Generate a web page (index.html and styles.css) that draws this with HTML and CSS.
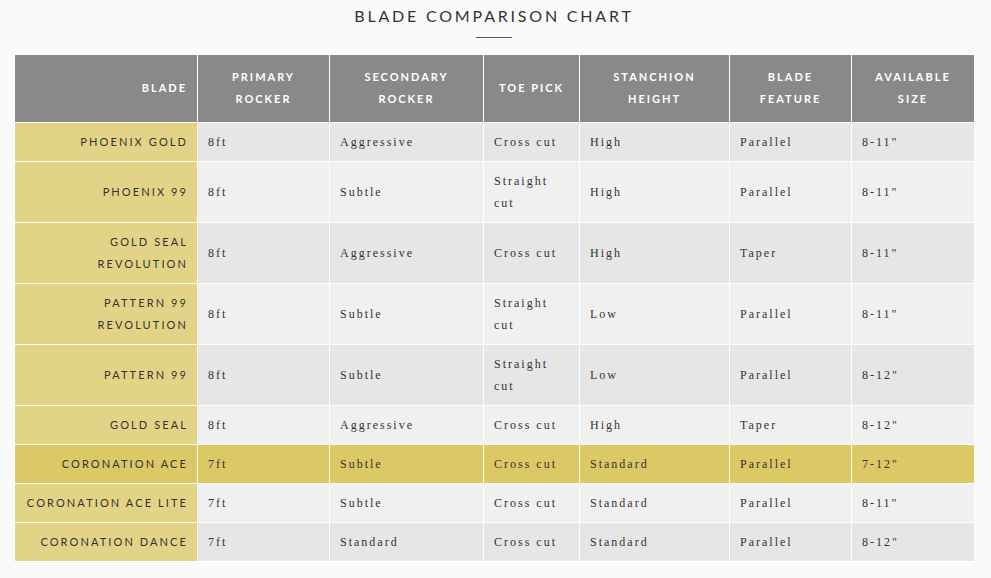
FILE: index.html
```html
<!DOCTYPE html>
<html lang="en">
<head>
<meta charset="utf-8">
<title>Blade Comparison Chart</title>
<link rel="stylesheet" href="styles.css">
</head>
<body>
<div class="page">
  <h1 class="title">BLADE COMPARISON CHART</h1>
  <div class="rule"></div>
  <table class="chart">
    <colgroup>
      <col class="c1"><col class="c2"><col class="c3"><col class="c4"><col class="c5"><col class="c6"><col class="c7">
    </colgroup>
    <thead>
      <tr>
        <th class="blade">BLADE</th>
        <th>PRIMARY ROCKER</th>
        <th>SECONDARY ROCKER</th>
        <th>TOE PICK</th>
        <th>STANCHION HEIGHT</th>
        <th>BLADE FEATURE</th>
        <th>AVAILABLE SIZE</th>
      </tr>
    </thead>
    <tbody>
      <tr class="odd"><td class="name">PHOENIX GOLD</td><td>8ft</td><td>Aggressive</td><td>Cross cut</td><td>High</td><td>Parallel</td><td>8-11"</td></tr>
      <tr class="even"><td class="name">PHOENIX 99</td><td>8ft</td><td>Subtle</td><td>Straight cut</td><td>High</td><td>Parallel</td><td>8-11"</td></tr>
      <tr class="odd"><td class="name">GOLD SEAL REVOLUTION</td><td>8ft</td><td>Aggressive</td><td>Cross cut</td><td>High</td><td>Taper</td><td>8-11"</td></tr>
      <tr class="even"><td class="name">PATTERN 99 REVOLUTION</td><td>8ft</td><td>Subtle</td><td>Straight cut</td><td>Low</td><td>Parallel</td><td>8-11"</td></tr>
      <tr class="odd"><td class="name">PATTERN 99</td><td>8ft</td><td>Subtle</td><td>Straight cut</td><td>Low</td><td>Parallel</td><td>8-12"</td></tr>
      <tr class="even"><td class="name">GOLD SEAL</td><td>8ft</td><td>Aggressive</td><td>Cross cut</td><td>High</td><td>Taper</td><td>8-12"</td></tr>
      <tr class="hl"><td class="name">CORONATION ACE</td><td>7ft</td><td>Subtle</td><td>Cross cut</td><td>Standard</td><td>Parallel</td><td>7-12"</td></tr>
      <tr class="even"><td class="name">CORONATION ACE LITE</td><td>7ft</td><td>Subtle</td><td>Cross cut</td><td>Standard</td><td>Parallel</td><td>8-11"</td></tr>
      <tr class="odd"><td class="name">CORONATION DANCE</td><td>7ft</td><td>Standard</td><td>Cross cut</td><td>Standard</td><td>Parallel</td><td>8-12"</td></tr>
    </tbody>
  </table>
</div>
</body>
</html>
```

FILE: styles.css
```css
html, body {
  margin: 0;
  padding: 0;
  background: #fafafa;
}
.page {
  padding: 0 17px 0 14px;
}
.title {
  margin: 0;
  padding-top: 6px;
  text-align: center;
  font-family: Lato, "Liberation Sans", sans-serif;
  font-weight: 400;
  font-size: 16px;
  line-height: 20px;
  letter-spacing: 2.8px;
  color: #333;
}
.rule {
  width: 36px;
  height: 1px;
  background: #555;
  margin: 11px auto 16px;
}
.chart {
  width: 960px;
  table-layout: fixed;
  border-collapse: collapse;
}
.c1 { width: 183px; }
.c2 { width: 132px; }
.c3 { width: 154px; }
.c4 { width: 96px; }
.c5 { width: 150px; }
.c6 { width: 122px; }
.c7 { width: 123px; }
.chart th,
.chart td {
  border: 1px solid #fff;
  vertical-align: middle;
}
.chart th {
  background: #898989;
  color: #fff;
  font-family: Lato, "Liberation Sans", sans-serif;
  font-weight: 700;
  font-size: 11px;
  letter-spacing: 2px;
  line-height: 22px;
  padding: 11px 10px 12px;
  text-align: center;
}
.chart th.blade {
  text-align: right;
}
.chart td {
  font-family: "Liberation Serif", serif;
  font-size: 12px;
  letter-spacing: 2px;
  line-height: 22px;
  color: #333;
  padding: 8px 10px;
  text-align: left;
}
.chart td.name {
  font-family: Lato, "Liberation Sans", sans-serif;
  font-size: 11px;
  letter-spacing: 2.1px;
  text-align: right;
  background: #e3d386;
  padding: 8px 9px 8px 4px;
}
.odd td { background: #e6e6e6; }
.even td { background: #f0f0f0; }
.hl td,
.hl td.name { background: #dcc865; }
```
